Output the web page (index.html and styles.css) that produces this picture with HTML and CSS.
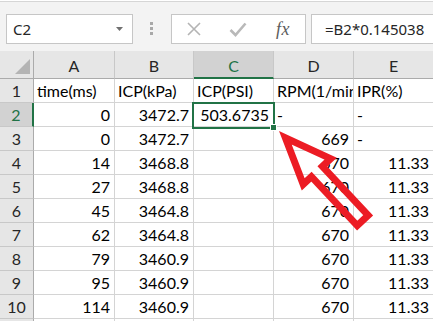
FILE: index.html
```html
<!DOCTYPE html>
<html>
<head>
<meta charset="utf-8">
<link rel="stylesheet" href="styles.css">
</head>
<body>
<div class="page">
  <div class="toolbar">
    <div class="namebox">
      <span>C2</span>
      <svg class="caret" width="7" height="4" viewBox="0 0 7 4"><polygon points="0,0 7,0 3.5,4" fill="#707070"/></svg>
    </div>
    <div class="grip"><i></i><i></i><i></i></div>
    <div class="fxbtns">
      <span class="btn"><svg width="14" height="14" viewBox="0 0 14 14"><path d="M1 1 L13 13 M13 1 L1 13" stroke="#b4b4b4" stroke-width="1.6" fill="none"/></svg></span>
      <span class="btn"><svg width="18" height="15" viewBox="0 0 18 15"><path d="M1.5 8 L6.5 13 L16.5 1.5" stroke="#b9b9b9" stroke-width="2.6" fill="none"/></svg></span>
      <span class="btn fx">fx</span>
    </div>
    <div class="formula">=B2*0.145038</div>
  </div>

  <div class="grid">
    <div class="hd corner"><span class="tri"></span></div>
    <div class="hd col">A</div>
    <div class="hd col">B</div>
    <div class="hd col sel">C</div>
    <div class="hd col">D</div>
    <div class="hd col">E</div>

    <div class="hd row">1</div>
    <div class="c">time(ms)</div>
    <div class="c">ICP(kPa)</div>
    <div class="c">ICP(PSI)</div>
    <div class="c flush"><span class="clip">RPM(1/min)</span></div>
    <div class="c">IPR(%)</div>

    <div class="hd row sel">2</div>
    <div class="c n">0</div>
    <div class="c n">3472.7</div>
    <div class="c n">503.6735</div>
    <div class="c">-</div>
    <div class="c">-</div>

    <div class="hd row">3</div>
    <div class="c n">0</div>
    <div class="c n">3472.7</div>
    <div class="c"></div>
    <div class="c n">669</div>
    <div class="c">-</div>

    <div class="hd row">4</div>
    <div class="c n">14</div>
    <div class="c n">3468.8</div>
    <div class="c"></div>
    <div class="c n">670</div>
    <div class="c n">11.33</div>

    <div class="hd row">5</div>
    <div class="c n">27</div>
    <div class="c n">3468.8</div>
    <div class="c"></div>
    <div class="c n">670</div>
    <div class="c n">11.33</div>

    <div class="hd row">6</div>
    <div class="c n">45</div>
    <div class="c n">3464.8</div>
    <div class="c"></div>
    <div class="c n">670</div>
    <div class="c n">11.33</div>

    <div class="hd row">7</div>
    <div class="c n">62</div>
    <div class="c n">3464.8</div>
    <div class="c"></div>
    <div class="c n">670</div>
    <div class="c n">11.33</div>

    <div class="hd row">8</div>
    <div class="c n">79</div>
    <div class="c n">3460.9</div>
    <div class="c"></div>
    <div class="c n">670</div>
    <div class="c n">11.33</div>

    <div class="hd row">9</div>
    <div class="c n">95</div>
    <div class="c n">3460.9</div>
    <div class="c"></div>
    <div class="c n">670</div>
    <div class="c n">11.33</div>

    <div class="hd row">10</div>
    <div class="c n">114</div>
    <div class="c n">3460.9</div>
    <div class="c"></div>
    <div class="c n">670</div>
    <div class="c n">11.33</div>

    <div class="hd row"></div>
    <div class="c"></div>
    <div class="c"></div>
    <div class="c"></div>
    <div class="c"></div>
    <div class="c"></div>
  </div>

  <div class="selection"></div>
  <div class="handle"></div>

  <svg class="arrow" width="433" height="321" viewBox="0 0 433 321">
    <g transform="translate(279 131) rotate(46.9)">
      <polygon points="9.3,0 55.5,18.8 55.5,7.5 122.5,7.5 122.5,-7.5 55.5,-7.5 55.5,-18.8"
               fill="none" stroke="#ec1c24" stroke-width="7" stroke-linejoin="miter" stroke-miterlimit="6"/>
    </g>
  </svg>
</div>
</body>
</html>
```

FILE: styles.css
```css
html, body {
  margin: 0;
  padding: 0;
  background: #ffffff;
  overflow: hidden;
}

.page {
  position: relative;
  width: 433px;
  height: 321px;
  overflow: hidden;
}

.toolbar {
  margin-top: 1px;
  border-top: 1px solid #d6d6d6;
  height: 50px;
  box-sizing: border-box;
  padding: 12px 0 0 6px;
  background: #f3f3f3;
  display: flex;
  align-items: flex-start;
  font-family: "Noto Sans", sans-serif;
  font-size: 15px;
  color: #262626;
}

.namebox {
  width: 127px;
  height: 30px;
  box-sizing: border-box;
  border: 1px solid #c6c6c6;
  background: #fff;
  display: flex;
  align-items: center;
  justify-content: space-between;
  padding: 0 9px 0 6px;
}

.grip {
  margin-left: 17px;
  margin-top: 8px;
  display: flex;
  flex-direction: column;
  gap: 2px;
}
.grip i {
  display: block;
  width: 3px;
  height: 3px;
  background: #a8a8a8;
}

.fxbtns {
  margin-left: 18px;
  width: 135px;
  height: 30px;
  box-sizing: border-box;
  border: 1px solid #c6c6c6;
  background: #fff;
  display: flex;
}
.btn {
  flex: 1;
  display: flex;
  align-items: center;
  justify-content: center;
}
.fx {
  font-family: "Liberation Serif", serif;
  font-style: italic;
  font-size: 18px;
  color: #5c5c5c;
  letter-spacing: 0.5px;
  padding-left: 1px;
}

.formula {
  margin-left: 5px;
  flex: 1;
  height: 30px;
  box-sizing: border-box;
  border: 1px solid #c6c6c6;
  border-right: none;
  background: #fff;
  display: flex;
  align-items: center;
  padding-left: 13px;
  white-space: nowrap;
}

.grid {
  display: grid;
  grid-template-columns: 34px 81px 79px 80px 80px 80px;
  grid-template-rows: 28px repeat(11, 24px);
  font-family: "Lato", sans-serif;
  font-size: 16px;
  line-height: 18px;
  color: #000;
}

.hd {
  background: #e6e6e6;
  box-sizing: border-box;
  color: #262626;
  display: flex;
  justify-content: center;
}
.hd.col {
  align-items: flex-end;
  padding-bottom: 3px;
  border-right: 1px solid #c8c8c8;
  border-bottom: 1px solid #ababab;
}
.hd.corner {
  border-right: 1px solid #ababab;
  border-bottom: 1px solid #ababab;
  position: relative;
}
.tri {
  position: absolute;
  left: 15px;
  top: 8px;
  width: 0;
  height: 0;
  border-left: 15px solid transparent;
  border-bottom: 15px solid #b4b4b4;
}
.hd.row {
  align-items: flex-end;
  padding-bottom: 2px;
  border-right: 1px solid #ababab;
  border-bottom: 1px solid #c8c8c8;
}
.hd.col.sel {
  background: #d2d2d2;
  color: #217346;
  border-bottom: 2px solid #217346;
  padding-bottom: 2px;
}
.hd.row.sel {
  background: #d2d2d2;
  color: #217346;
  border-right: 2px solid #217346;
}

.c {
  box-sizing: border-box;
  border-right: 1px solid #d4d4d4;
  border-bottom: 1px solid #d4d4d4;
  display: flex;
  align-items: flex-end;
  padding: 0 4px 2px 3px;
  white-space: nowrap;
  overflow: hidden;
}
.c.n {
  justify-content: flex-end;
}
.c.flush {
  padding-right: 0;
}
.clip {
  display: block;
  min-width: 0;
  max-width: 100%;
  overflow: hidden;
}

.selection {
  position: absolute;
  left: 192px;
  top: 102px;
  width: 83px;
  height: 27px;
  box-sizing: border-box;
  border: 2px solid #217346;
}
.handle {
  position: absolute;
  left: 270px;
  top: 124px;
  width: 5px;
  height: 5px;
  background: #217346;
  border: 1px solid #ffffff;
}

.arrow {
  position: absolute;
  left: 0;
  top: 0;
  pointer-events: none;
}
```
